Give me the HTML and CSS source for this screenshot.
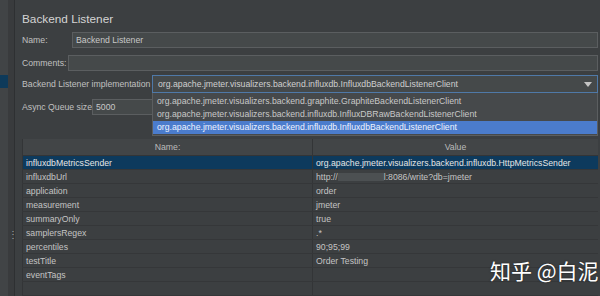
FILE: index.html
```html
<!DOCTYPE html>
<html lang="en">
<head>
<meta charset="UTF-8">
<title>Backend Listener</title>
<link rel="stylesheet" href="styles.css">
</head>
<body>

<div class="app">
    <!-- 왼쪽 트리 -->
    <div class="side">
        <div class="side-tree"><div class="side-sel"></div></div>
        <div class="side-grip"><span class="dots">&#8942;</span></div>
    </div>

    <!-- 메인 패널 -->
    <div class="panel">
        <h1 class="title">Backend Listener</h1>

        <div class="row">
            <span class="lbl name-lbl">Name:</span>
            <div class="field">Backend Listener</div>
        </div>
        <div class="row comments">
            <span class="lbl">Comments:</span>
            <div class="field"></div>
        </div>

        <div class="combo-wrap">
            <div class="left-col">
                <div class="row">
                    <span class="lbl">Backend Listener implementation</span>
                </div>
                <div class="row queue">
                    <span class="lbl">Async Queue size</span>
                    <div class="field small">5000</div>
                </div>
            </div>
            <div class="combo-col">
                <div class="combo">
                    <span>org.apache.jmeter.visualizers.backend.influxdb.InfluxdbBackendListenerClient</span>
                    <span class="arrow"></span>
                </div>
                <div class="popup">
                    <div class="opt">org.apache.jmeter.visualizers.backend.graphite.GraphiteBackendListenerClient</div>
                    <div class="opt">org.apache.jmeter.visualizers.backend.influxdb.InfluxDBRawBackendListenerClient</div>
                    <div class="opt sel">org.apache.jmeter.visualizers.backend.influxdb.InfluxdbBackendListenerClient</div>
                </div>
            </div>
        </div>

        <table class="args">
            <tr><th>Name:</th><th>Value</th></tr>
            <tr class="sel"><td>influxdbMetricsSender</td><td>org.apache.jmeter.visualizers.backend.influxdb.HttpMetricsSender</td></tr>
            <tr><td>influxdbUrl</td><td>http://<span class="blur"></span>l:8086/write?db=jmeter</td></tr>
            <tr><td>application</td><td>order</td></tr>
            <tr><td>measurement</td><td>jmeter</td></tr>
            <tr><td>summaryOnly</td><td>true</td></tr>
            <tr><td>samplersRegex</td><td>.*</td></tr>
            <tr><td>percentiles</td><td>90;95;99</td></tr>
            <tr><td>testTitle</td><td>Order Testing</td></tr>
            <tr><td>eventTags</td><td></td></tr>
            <tr><td></td><td></td></tr>
        </table>
    </div>
</div>

<div class="watermark">知乎 @白泥</div>

</body>
</html>
```

FILE: styles.css
```css
body {
    margin: 0;
    padding: 0;
    background-color: #3c3f41;
    font-family: "Liberation Sans", Arial, sans-serif;
    font-size: 8.7px;
    color: #c8c8c8;
    overflow: hidden;
}
.app {
    display: flex;
    width: 600px;
    height: 296px;
    overflow: hidden;
}
/* 왼쪽 트리 */
.side {
    display: flex;
    width: 15px;
    flex-shrink: 0;
}
.side-tree {
    width: 8px;
    background-color: #414446;
    padding-top: 75px;
}
.side-sel {
    height: 13px;
    background-color: #0e3a5a;
}
.side-grip {
    width: 6px;
    background-color: #393b3d;
    border-right: 1px solid #2e3032;
    position: relative;
}
.dots {
    position: absolute;
    top: 229px;
    left: 0;
    font-size: 10px;
    color: #a0a0a0;
}
/* 메인 패널 */
.panel {
    flex: 1;
    padding: 12px 2px 0 7px;
}
.title {
    margin: 0 0 6px 0;
    font-size: 11.8px;
    font-weight: normal;
    color: #d4d4d4;
}
.row {
    display: flex;
    align-items: center;
    height: 16px;
    margin-bottom: 7px;
}
.row.comments {
    margin-bottom: 4px;
}
.lbl {
    color: #c0c0c0;
    white-space: nowrap;
    margin-right: 2px;
}
.name-lbl {
    width: 48px;
}
.field {
    flex: 1;
    height: 14px;
    line-height: 14px;
    border: 1px solid #5b5e60;
    background-color: #45494a;
    padding-left: 3px;
    color: #c8c8c8;
}
.field.small {
    flex: none;
    width: 70px;
}
/* 콤보 박스 */
.combo-wrap {
    display: flex;
    margin-bottom: 3px;
}
.left-col {
    width: 130px;
}
.left-col .row {
    height: 18px;
    margin-bottom: 5px;
}
.queue .lbl {
    margin-right: 0;
}
.combo-col {
    flex: 1;
    position: relative;
    z-index: 1;
}
.combo {
    display: flex;
    align-items: center;
    justify-content: space-between;
    height: 16px;
    padding-left: 5px;
    border: 1px solid #4f79a8;
    background-color: #45494a;
    color: #cfcfcf;
}
.arrow {
    width: 0;
    height: 0;
    margin-right: 5px;
    border-left: 4px solid transparent;
    border-right: 4px solid transparent;
    border-top: 5px solid #c4c4c4;
}
.popup {
    background-color: #46494b;
    border: 1px solid #5b5e60;
    border-top: none;
    padding: 2px 0 1px 0;
}
.opt {
    height: 13px;
    line-height: 13px;
    padding-left: 4px;
    color: #c8c8c8;
}
.opt.sel {
    background-color: #4b7ccc;
    color: #eef3ff;
}
/* 테이블 */
.args {
    width: 100%;
    border-collapse: collapse;
    table-layout: fixed;
}
.args th {
    height: 14px;
    font-weight: normal;
    color: #bbbbbb;
    background-color: #424547;
    border-left: 1px solid #333537;
    border-bottom: 1px solid #333537;
}
.args td {
    height: 13px;
    padding: 0 0 0 3px;
    color: #c4c4c4;
    border-left: 1px solid #333537;
    border-bottom: 1px solid #353739;
    white-space: nowrap;
    overflow: hidden;
}
.args th:first-child {
    width: 287px;
}
.args tr.sel td {
    background-color: #0d3a5d;
    color: #e6e6e6;
}
.blur {
    display: inline-block;
    width: 46px;
    height: 8px;
    background-color: #4c5052;
    vertical-align: middle;
}
.watermark {
    position: absolute;
    left: 490px;
    top: 255px;
    white-space: nowrap;
    font-family: "Noto Sans CJK SC", sans-serif;
    font-size: 21px;
    color: #ffffff;
    text-shadow: 0 0 2px rgba(0, 0, 0, 0.5);
}
```
